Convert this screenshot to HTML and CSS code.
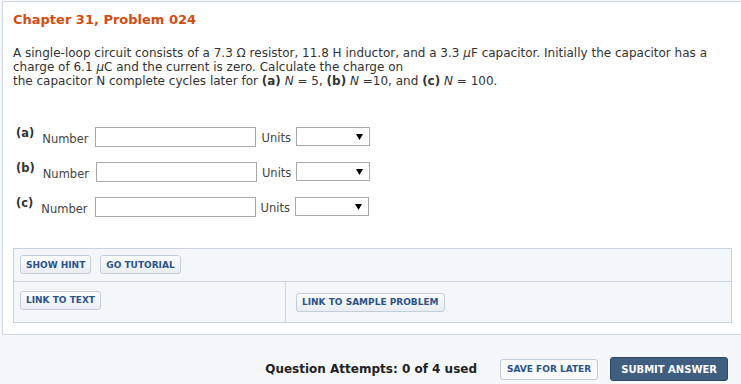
FILE: index.html
```html
<!DOCTYPE html>
<html lang="en">
<head>
<meta charset="UTF-8">
<title>Chapter 31, Problem 024</title>
<link rel="stylesheet" href="styles.css">
</head>
<body>
<div class="panel">
  <h1 class="title">Chapter 31, Problem 024</h1>
  <p class="question">
    A single-loop circuit consists of a 7.3 &Omega; resistor, 11.8 H inductor, and a 3.3 <i>&mu;</i>F capacitor. Initially the capacitor has a<br>
    charge of 6.1 <i>&mu;</i>C and the current is zero. Calculate the charge on<br>
    the capacitor N complete cycles later for <b>(a)</b> <i>N</i> = 5, <b>(b)</b> <i>N</i> =10, and <b>(c)</b> <i>N</i> = 100.
  </p>

  <div class="parts">
    <div class="part">
      <span class="part-label">(a)</span>
      <span class="field-label">Number</span>
      <input type="text" class="number-box">
      <span class="units-label">Units</span>
      <div class="units-select"><svg width="7" height="6" viewBox="0 0 7 6"><path d="M0 0h7L3.5 6z" fill="#000"/></svg></div>
    </div>
    <div class="part">
      <span class="part-label">(b)</span>
      <span class="field-label">Number</span>
      <input type="text" class="number-box">
      <span class="units-label">Units</span>
      <div class="units-select"><svg width="7" height="6" viewBox="0 0 7 6"><path d="M0 0h7L3.5 6z" fill="#000"/></svg></div>
    </div>
    <div class="part">
      <span class="part-label">(c)</span>
      <span class="field-label">Number</span>
      <input type="text" class="number-box">
      <span class="units-label">Units</span>
      <div class="units-select"><svg width="7" height="6" viewBox="0 0 7 6"><path d="M0 0h7L3.5 6z" fill="#000"/></svg></div>
    </div>
  </div>

  <div class="hint-box">
    <div class="hint-row">
      <button class="small-btn">Show Hint</button>
      <button class="small-btn">Go Tutorial</button>
    </div>
    <div class="link-row">
      <div class="link-cell"><button class="small-btn">Link to Text</button></div>
      <div class="link-cell sample"><button class="small-btn">Link to Sample Problem</button></div>
    </div>
  </div>
</div>

<div class="footer">
  <span class="attempts">Question Attempts: 0 of 4 used</span>
  <button class="small-btn save-btn">Save for Later</button>
  <button class="submit-btn">Submit Answer</button>
</div>
</body>
</html>
```

FILE: styles.css
```css
/* Page */
body {
  margin: 0;
  padding: 0;
  background-color: #f5f7fa;
  font-family: "DejaVu Sans", Verdana, sans-serif;
  color: #333;
}
.panel {
  margin: 1px 0 0 2px;
  padding: 10px 9px 11px 10px;
  background-color: #fff;
  border: 1px solid #cfd7e2;
  border-right: none;
}
.title {
  margin: 0;
  font-size: 13px;
  font-weight: bold;
  color: #d24d12;
}
.question {
  margin: 19px 0 0;
  font-size: 12px;
  line-height: 14px;
}

/* Answer rows */
.parts {
  margin-top: 39px;
  padding-left: 3px;
}
.part {
  display: flex;
  align-items: flex-end;
  height: 20px;
  margin-bottom: 15px;
}
.part-label {
  align-self: flex-start;
  margin-top: -1px;
  font-size: 11.5px;
  font-weight: bold;
}
.field-label {
  margin: 0 7px 1px 8px;
  font-size: 11.5px;
  color: #444;
}
.number-box {
  box-sizing: border-box;
  width: 161px;
  height: 20px;
  margin: 0;
  border: 1px solid #a9a9a9;
  padding: 2px 4px;
}
.units-label {
  margin: 0 5px 2px 5px;
  font-size: 11.5px;
  color: #444;
}
.units-select {
  box-sizing: border-box;
  width: 74px;
  height: 19px;
  border: 1px solid #a9a9a9;
  display: flex;
  align-items: center;
  justify-content: flex-end;
  padding-right: 6px;
  margin-bottom: 1px;
}

/* Hint / link box */
.hint-box {
  margin-top: 31px;
  background-color: #f4f7fa;
  border: 1px solid #c9d3df;
}
.hint-row {
  display: flex;
  gap: 9px;
  padding: 6px 6px 7px;
  border-bottom: 1px solid #c9d3df;
}
.link-row {
  display: flex;
  height: 40px;
}
.link-cell {
  box-sizing: border-box;
  width: 272px;
  padding: 6px;
  border-right: 1px solid #c9d3df;
}
.link-cell.sample {
  border-right: none;
  padding-top: 8px;
  padding-left: 10px;
}
.small-btn {
  height: 19px;
  padding: 0 5px;
  font-family: "DejaVu Sans", Verdana, sans-serif;
  font-size: 9px;
  font-weight: bold;
  text-transform: uppercase;
  color: #2c5288;
  background: linear-gradient(#fbfcfd, #e9eef4);
  border: 1px solid #c3ceda;
  border-radius: 3px;
}

/* Footer */
.footer {
  display: flex;
  align-items: center;
  justify-content: flex-end;
  padding: 22px 13px 0 0;
}
.attempts {
  font-size: 12px;
  font-weight: bold;
  color: #222;
  margin-right: 23px;
}
.save-btn {
  height: 21px;
  padding: 0 6px;
  background: #f8fafc;
  margin-right: 12px;
}
.submit-btn {
  height: 24px;
  padding: 0 10px;
  font-family: "DejaVu Sans", Verdana, sans-serif;
  font-size: 10px;
  font-weight: bold;
  text-transform: uppercase;
  color: #fff;
  background-color: #3f5e80;
  border: 1px solid #2e4865;
  border-radius: 3px;
}
```
